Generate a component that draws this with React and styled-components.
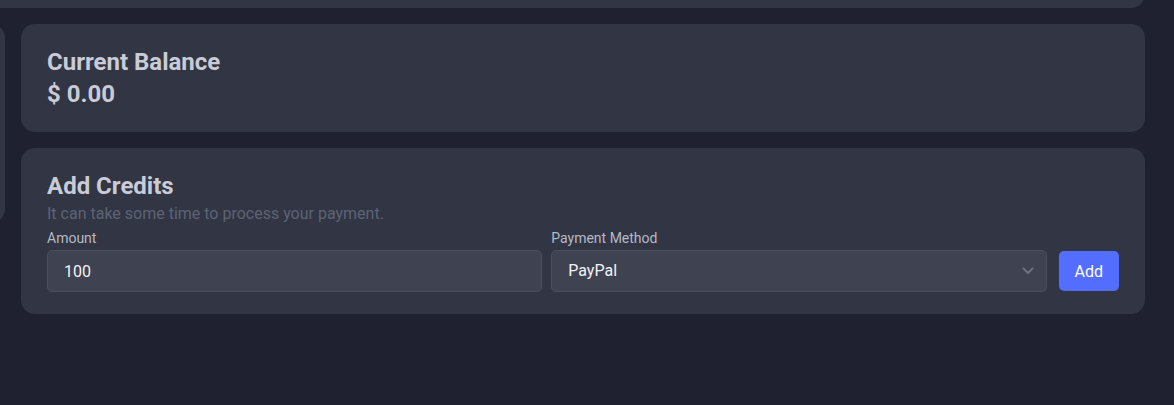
import React, { useState } from 'react'
import styled, { createGlobalStyle } from 'styled-components'

const GlobalStyle = createGlobalStyle`
  html, body {
    margin: 0;
    padding: 0;
    background: #1f2130;
    overflow-x: hidden;
  }
  body {
    font-family: Roboto, "Liberation Sans", Arial, sans-serif;
  }
  * {
    box-sizing: border-box;
  }
`

const Page = styled.div`
  display: flex;
  flex-direction: column;
  gap: 16px;
  margin-left: -295px;
  padding-right: 29px;
  min-height: 405px;
`

const Card = styled.div`
  background: #323543;
  border-radius: 14px;
  padding: 22px 26px;
`

const TopCard = styled(Card)`
  height: 200px;
  margin-top: -192px;
`

const Row = styled.div`
  display: flex;
  gap: 16px;
  align-items: flex-start;
`

const SideCard = styled(Card)`
  flex: 0 0 300px;
  height: 199px;
`

const Main = styled.div`
  flex: 1;
  display: flex;
  flex-direction: column;
  gap: 16px;
`

const Title = styled.h2`
  margin: 0;
  font-size: 24px;
  line-height: 32px;
  font-weight: 700;
  color: #c9cbd6;
`

const Subtitle = styled.p`
  margin: 0;
  font-size: 16px;
  line-height: 24px;
  color: #5d6375;
`

const Fields = styled.div`
  display: flex;
  align-items: flex-end;
  gap: 9px;
  margin-top: 2px;
`

const Field = styled.label`
  flex: 1;
  display: flex;
  flex-direction: column;
  gap: 2px;
`

const Label = styled.span`
  font-size: 14px;
  line-height: 20px;
  color: #b5b9c6;
`

const Input = styled.input`
  width: 100%;
  height: 42px;
  padding: 8px 16px;
  background: #3f4251;
  border: 1px solid #4b4e5c;
  border-radius: 5px;
  color: #f2f3f7;
  font-family: inherit;
  font-size: 16px;
  line-height: 24px;
  outline: none;
`

const SelectWrap = styled.div`
  position: relative;
`

const Select = styled.select`
  width: 100%;
  height: 42px;
  padding: 8px 40px 8px 16px;
  appearance: none;
  background: #3f4251;
  border: 1px solid #4b4e5c;
  border-radius: 5px;
  color: #f2f3f7;
  font-family: inherit;
  font-size: 16px;
  line-height: 24px;
  outline: none;
`

const Chevron = styled.svg`
  position: absolute;
  right: 12px;
  top: 15px;
  pointer-events: none;
`

const AddButton = styled.button`
  height: 40px;
  margin: 0 0 1px 3px;
  padding: 0 16px;
  background: #536dfe;
  border: none;
  border-radius: 5px;
  color: #ffffff;
  font-family: inherit;
  font-size: 16px;
  cursor: pointer;
`

const AddCredits = () => {
  const [amount, setAmount] = useState('100')
  const [method, setMethod] = useState('paypal')

  return (
    <Card>
      <Title>Add Credits</Title>
      <Subtitle>It can take some time to process your payment.</Subtitle>
      <Fields>
        <Field>
          <Label>Amount</Label>
          <Input value={amount} onChange={e => setAmount(e.target.value)} />
        </Field>
        <Field as="div">
          <Label>Payment Method</Label>
          <SelectWrap>
            <Select value={method} onChange={e => setMethod(e.target.value)}>
              <option value="paypal">PayPal</option>
              <option value="stripe">Stripe</option>
            </Select>
            <Chevron width="14" height="12" viewBox="0 0 14 12">
              <path d="M2.5 3.5 L7 8 L11.5 3.5" fill="none" stroke="#6c6f7d" strokeWidth="2.2" strokeLinecap="round" strokeLinejoin="round" />
            </Chevron>
          </SelectWrap>
        </Field>
        <AddButton>Add</AddButton>
      </Fields>
    </Card>
  )
}

const App = () => {
  return (
    <Page>
      <GlobalStyle />
      <TopCard />
      <Row>
        <SideCard />
        <Main>
          <Card>
            <Title>Current Balance</Title>
            <Title>$ 0.00</Title>
          </Card>
          <AddCredits />
        </Main>
      </Row>
    </Page>
  )
}

export default App
